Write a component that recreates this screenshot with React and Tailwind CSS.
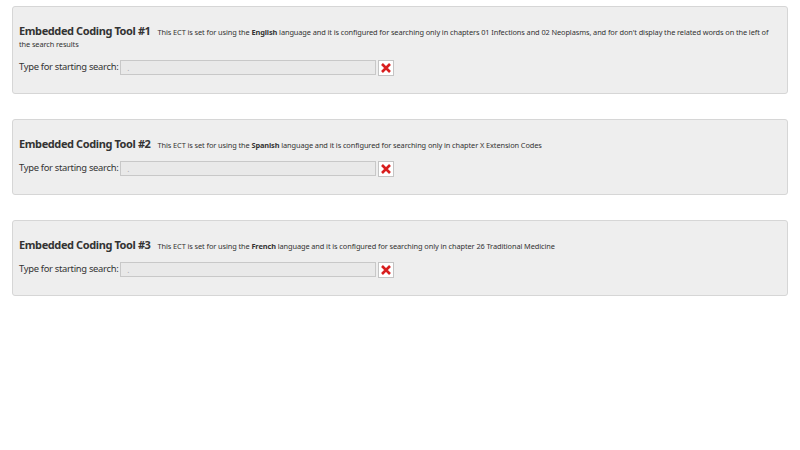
import React from "react";

const tools = [
  {
    n: 1,
    lang: "English",
    rest: "language and it is configured for searching only in chapters 01 Infections and 02 Neoplasms, and for don't display the related words on the left of the search results",
  },
  {
    n: 2,
    lang: "Spanish",
    rest: "language and it is configured for searching only in chapter X Extension Codes",
  },
  {
    n: 3,
    lang: "French",
    rest: "language and it is configured for searching only in chapter 26 Traditional Medicine",
  },
];

function ClearButton() {
  return (
    <button className="ml-[2px] flex h-[16px] w-[16px] items-center justify-center border border-[#c4c4c4] bg-white">
      <svg width="12" height="12" viewBox="0 0 12 12">
        <path d="M2 2 L10 10 M10 2 L2 10" stroke="#d81e1e" strokeWidth="2.6" strokeLinecap="butt" />
      </svg>
    </button>
  );
}

function ToolPanel({ tool }) {
  return (
    <div className="rounded-[3px] border border-[#d6d6d6] bg-[#eeeeee] pl-[6px] pr-[14px] pt-[18px] pb-[18px]">
      <div className="text-[7.4px] leading-[12px] text-[#333333]">
        <span className="mr-[7px] text-[11px] font-bold tracking-[-0.4px]">Embedded Coding Tool #{tool.n}</span>
        <span className="tracking-[-0.1px]">
          This ECT is set for using the <b>{tool.lang}</b> {tool.rest}
        </span>
      </div>
      <div className="mt-[10px] flex h-[15px] items-center">
        <span className="mr-[2px] text-[9.4px] tracking-[-0.3px] text-[#333333]">Type for starting search:</span>
        <div className="flex h-[15px] w-[256px] items-center border border-[#c8c8c8] bg-[#e9e9e9] px-[6px] text-[8px] text-[#aaaaaa]">
          .
        </div>
        <ClearButton />
      </div>
    </div>
  );
}

export default function App() {
  return (
    <div className="min-h-[450px] bg-white px-[12px] pt-[6px] font-['Noto_Sans','DejaVu_Sans',sans-serif]">
      <div className="flex flex-col gap-[25px]">
        {tools.map((t) => (
          <ToolPanel key={t.n} tool={t} />
        ))}
      </div>
    </div>
  );
}
